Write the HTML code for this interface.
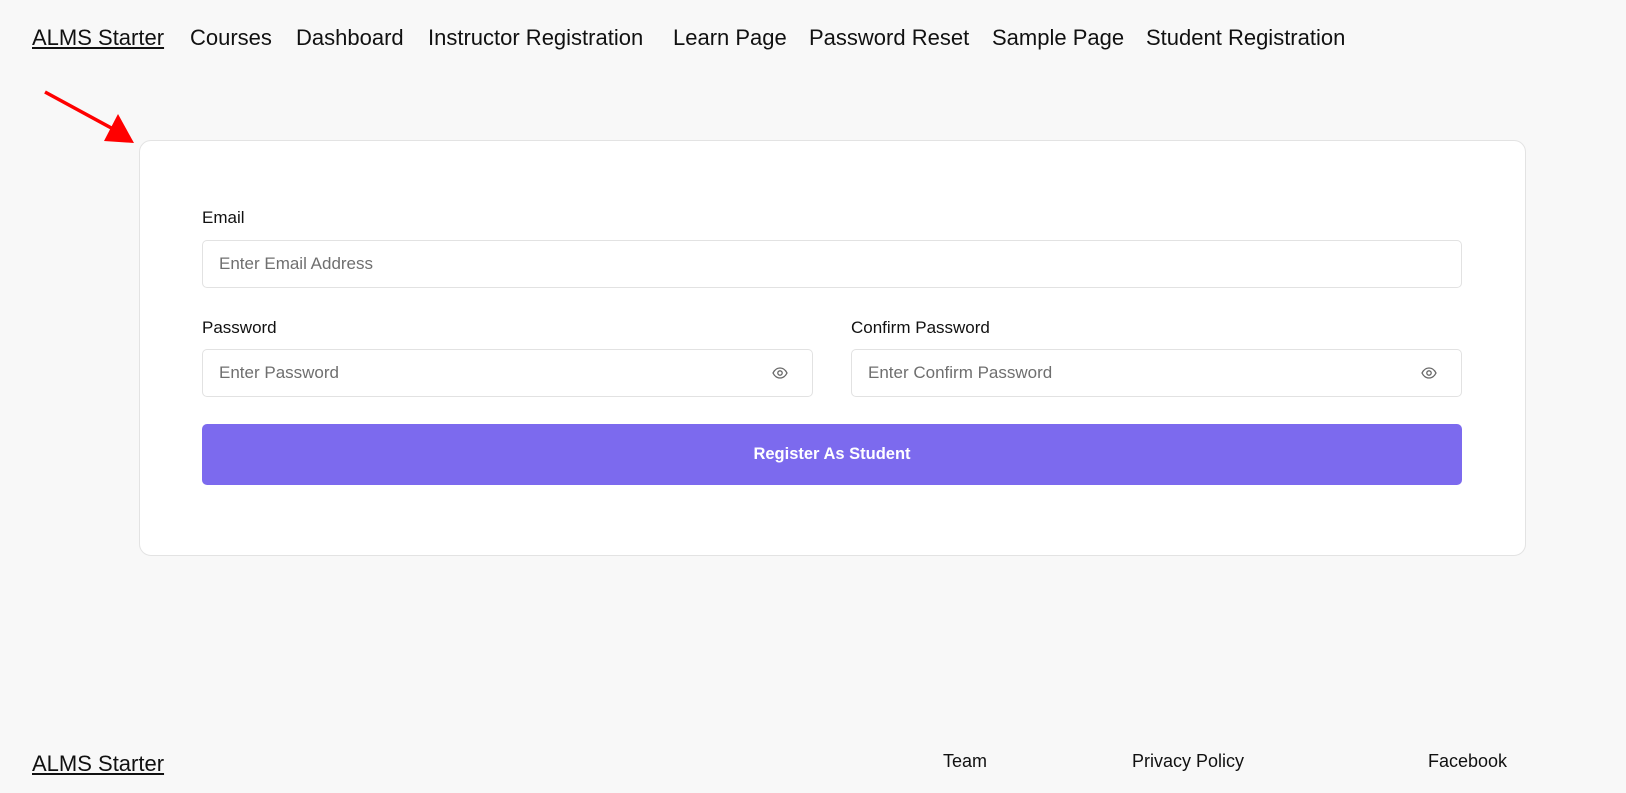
<!DOCTYPE html>
<html><head><style>
body{margin:0;width:1626px;height:793px;background:#f8f8f8;font-family:"Liberation Sans",sans-serif;position:relative;overflow:hidden;color:#111}
.nav a{position:absolute;top:25px;font-size:22px;color:#111;text-decoration:none;white-space:nowrap}
.card{position:absolute;left:139px;top:140px;width:1385px;height:414px;background:#fff;border:1px solid #e3e3e3;border-radius:12px}
.lbl{position:absolute;font-size:17px;color:#111}
.inp{position:absolute;height:48px;border:1px solid #e2e2e2;border-radius:5px;background:#fff;box-sizing:border-box;font-size:17px;color:#6f6f6f;padding-left:16px;line-height:46px}
.btn{position:absolute;left:202px;top:424px;width:1260px;height:61px;background:#7c6aee;border-radius:5px;color:#fff;font-size:16.5px;font-weight:bold;text-align:center;line-height:61px}
.eye{position:absolute;right:24px;top:16px}
.ft{position:absolute;top:751px;font-size:18px;color:#111}
</style></head><body>
<div class="nav">
<a style="left:32px;text-decoration:underline">ALMS Starter</a>
<a style="left:190px">Courses</a>
<a style="left:296px">Dashboard</a>
<a style="left:428px">Instructor Registration</a>
<a style="left:673px">Learn Page</a>
<a style="left:809px">Password Reset</a>
<a style="left:992px">Sample Page</a>
<a style="left:1146px">Student Registration</a>
</div>
<svg style="position:absolute;left:0;top:0" width="160" height="160"><line x1="45" y1="92" x2="115" y2="130" stroke="#f00" stroke-width="3.5"/><polygon points="134,143 104,141 118,114" fill="#f00"/></svg>
<div class="card"></div>
<div class="lbl" style="left:202px;top:208px">Email</div>
<div class="inp" style="left:202px;top:240px;width:1260px">Enter Email Address</div>
<div class="lbl" style="left:202px;top:318px">Password</div>
<div class="lbl" style="left:851px;top:318px">Confirm Password</div>
<div class="inp" style="left:202px;top:349px;width:611px">Enter Password<svg class="eye" width="16" height="14" viewBox="0 0 16 14"><path d="M1 7C3 3 5.5 2 8 2s5 1 7 5c-2 4-4.5 5-7 5s-5-1-7-5z" fill="none" stroke="#666" stroke-width="1.3"/><circle cx="8" cy="7" r="2.2" fill="none" stroke="#666" stroke-width="1.3"/></svg></div>
<div class="inp" style="left:851px;top:349px;width:611px">Enter Confirm Password<svg class="eye" width="16" height="14" viewBox="0 0 16 14"><path d="M1 7C3 3 5.5 2 8 2s5 1 7 5c-2 4-4.5 5-7 5s-5-1-7-5z" fill="none" stroke="#666" stroke-width="1.3"/><circle cx="8" cy="7" r="2.2" fill="none" stroke="#666" stroke-width="1.3"/></svg></div>
<div class="btn">Register As Student</div>
<div class="ft" style="left:32px;font-size:22px;top:751px;text-decoration:underline">ALMS Starter</div>
<div class="ft" style="left:943px">Team</div>
<div class="ft" style="left:1132px">Privacy Policy</div>
<div class="ft" style="left:1428px">Facebook</div>
</body></html>
